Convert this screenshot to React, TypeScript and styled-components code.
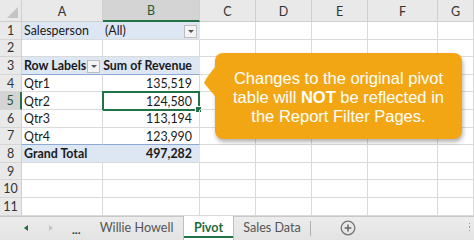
import React from "react";
import styled, { createGlobalStyle, css } from "styled-components";

const Global = createGlobalStyle`
  html, body { margin: 0; padding: 0; background: #fff; }
  body { width: 474px; height: 240px; overflow: hidden; font-family: Lato, "Open Sans", sans-serif; }
`;

const Page = styled.div`
  position: relative;
  width: 474px;
  height: 240px;
  display: flex;
  flex-direction: column;
  overflow: hidden;
`;

const Sheet = styled.div`
  display: grid;
  grid-template-columns: 22px 81px 97px 56px 56px 56px 70px 1fr;
  grid-template-rows: 22px repeat(11, 17.6px);
  font-size: 12.4px;
  color: #1a1a1a;
`;

const Corner = styled.div`
  position: relative;
  background: #e9e9e9;
  border-right: 1px solid #cfcfcf;
  border-bottom: 1px solid #cfcfcf;
  &::after {
    content: "";
    position: absolute;
    right: 3px;
    bottom: 3px;
    border-left: 11px solid transparent;
    border-bottom: 11px solid #c4c4c4;
  }
`;

const ColHead = styled.div<{ $sel?: boolean }>`
  display: flex;
  align-items: center;
  justify-content: center;
  background: ${(p) => (p.$sel ? "#d4d4d4" : "#e9e9e9")};
  border-right: 1px solid #cfcfcf;
  border-bottom: ${(p) => (p.$sel ? "2px solid #217346" : "1px solid #cfcfcf")};
  color: ${(p) => (p.$sel ? "#1f5a36" : "#333")};
  font-size: 12.5px;
  padding-top: 1px;
`;

const RowHead = styled.div<{ $sel?: boolean }>`
  display: flex;
  align-items: center;
  justify-content: center;
  background: ${(p) => (p.$sel ? "#d4d4d4" : "#e9e9e9")};
  border-right: ${(p) => (p.$sel ? "2px solid #217346" : "1px solid #cfcfcf")};
  border-bottom: 1px solid #d6d6d6;
  color: ${(p) => (p.$sel ? "#1f5a36" : "#333")};
  font-size: 12.5px;
`;

type Tone = "plain" | "filter" | "head" | "total";

const Cell = styled.div<{ $tone?: Tone; $right?: boolean; $bold?: boolean }>`
  position: relative;
  display: flex;
  align-items: center;
  justify-content: ${(p) => (p.$right ? "flex-end" : "flex-start")};
  padding: 1px 7px 0 2px;
  white-space: nowrap;
  overflow: visible;
  font-weight: ${(p) => (p.$bold ? 700 : 400)};
  border-right: 1px solid #dadada;
  border-bottom: 1px solid #dadada;
  ${(p) =>
    p.$tone === "filter" &&
    css`
      background: #dde6f3;
      border-right-color: #dde6f3;
      border-bottom-color: #dadada;
    `}
  ${(p) =>
    p.$tone === "head" &&
    css`
      background: #dde6f3;
      border-right-color: #dde6f3;
      border-bottom: 1px solid #8ea9d6;
    `}
  ${(p) =>
    p.$tone === "total" &&
    css`
      background: #dde6f3;
      border-right-color: #dde6f3;
      border-top: 1px solid #8ea9d6;
      margin-top: -1px;
    `}
`;

const SelectedCell = styled(Cell)`
  border: 2px solid #217346;
  margin: -1px 0 -1px -1px;
  padding-right: 6px;
  &::after {
    content: "";
    position: absolute;
    right: -4px;
    bottom: -4px;
    width: 5px;
    height: 5px;
    background: #217346;
    border: 1px solid #fff;
  }
`;

const Drop = styled.span`
  position: absolute;
  right: 2px;
  top: 3px;
  width: 11px;
  height: 11px;
  background: #f4f4f4;
  border: 1px solid #bdbdbd;
  display: flex;
  align-items: center;
  justify-content: center;
  &::before {
    content: "";
    border-left: 3px solid transparent;
    border-right: 3px solid transparent;
    border-top: 3px solid #555;
  }
`;

const Callout = styled.div`
  position: absolute;
  left: 215px;
  top: 53px;
  width: 247px;
  height: 86px;
  background: #f3a614;
  border-radius: 8px;
  box-shadow: 1px 3px 4px rgba(0, 0, 0, 0.3);
  color: #fff;
  font-family: "Liberation Sans", Arial, sans-serif;
  font-size: 16.5px;
  line-height: 19px;
  text-align: center;
  display: flex;
  align-items: center;
  justify-content: center;
  padding-top: 3px;
  box-sizing: border-box;
`;

const Pointer = styled.svg`
  position: absolute;
  left: -12px;
  top: 8px;
`;

const TabBar = styled.div`
  flex: 1;
  display: flex;
  align-items: stretch;
  background: linear-gradient(#ececec, #e3e3e3);
  border-top: 1px solid #c8c8c8;
  font-size: 12.6px;
  position: relative;
`;

const NavBox = styled.div`
  display: flex;
  align-items: center;
  width: 90px;
  padding-left: 24px;
  box-sizing: border-box;
`;

const Arrow = styled.span<{ $dir: "l" | "r"; $on?: boolean }>`
  width: 0;
  height: 0;
  border-top: 3.5px solid transparent;
  border-bottom: 3.5px solid transparent;
  ${(p) =>
    p.$dir === "l"
      ? css`border-right: 4px solid ${p.$on ? "#1f6b3c" : "#bbb"};`
      : css`border-left: 4px solid ${p.$on ? "#1f6b3c" : "#c4c4c4"};`}
  margin-right: 21px;
`;

const Dots = styled.span`
  color: #333;
  font-weight: 700;
  font-size: 12px;
  margin-left: -2px;
  margin-top: 3px;
`;

const Sep = styled.span`
  width: 1px;
  height: 15px;
  background: #9a9a9a;
  align-self: center;
  margin-left: 10px;
`;

const Tab = styled.div<{ $active?: boolean; $w: number }>`
  width: ${(p) => p.$w}px;
  display: flex;
  align-items: center;
  justify-content: center;
  color: ${(p) => (p.$active ? "#1e6b3c" : "#555")};
  font-weight: ${(p) => (p.$active ? 700 : 400)};
  background: ${(p) => (p.$active ? "#fff" : "transparent")};
  border-right: 1px solid ${(p) => (p.$active ? "#bfbfbf" : "transparent")};
  border-left: 1px solid ${(p) => (p.$active ? "#bfbfbf" : "transparent")};
  margin-top: -1px;
  position: relative;
  box-sizing: border-box;
  padding-bottom: 1px;
  ${(p) =>
    p.$active &&
    css`
      &::after {
        content: "";
        position: absolute;
        left: 0;
        right: 0;
        bottom: 2px;
        height: 2px;
        background: #217346;
      }
    `}
`;

const TabSep = styled.span`
  width: 1px;
  height: 15px;
  background: #b0b0b0;
  align-self: center;
`;

const AddBtn = styled.div`
  margin-left: 29px;
  display: flex;
  align-items: center;
`;

const VDots = styled.div`
  position: absolute;
  right: 4px;
  top: 6px;
  display: flex;
  flex-direction: column;
  gap: 2px;
  & > span {
    width: 1.5px;
    height: 1.5px;
    background: #999;
  }
`;

const cols = ["A", "B", "C", "D", "E", "F", "G"];

type Row = { a?: string; b?: string; tone?: Tone; bold?: boolean; aDrop?: boolean; bDrop?: boolean; sel?: boolean };

const rows: Row[] = [
  { a: "Salesperson", b: "(All)", tone: "filter", bDrop: true },
  {},
  { a: "Row Labels", b: "Sum of Revenue", tone: "head", bold: true, aDrop: true },
  { a: "Qtr1", b: "135,519" },
  { a: "Qtr2", b: "124,580", sel: true },
  { a: "Qtr3", b: "113,194" },
  { a: "Qtr4", b: "123,990" },
  { a: "Grand Total", b: "497,282", tone: "total", bold: true },
  {},
  {},
  {},
];

export default function App() {
  return (
    <Page>
      <Global />
      <Sheet>
        <Corner />
        {cols.map((c) => (
          <ColHead key={c} $sel={c === "B"}>
            {c}
          </ColHead>
        ))}
        {rows.map((r, i) => {
          const tone = r.tone ?? "plain";
          const BCell = r.sel ? SelectedCell : Cell;
          return (
            <React.Fragment key={i}>
              <RowHead $sel={r.sel}>{i + 1}</RowHead>
              <Cell $tone={tone} $bold={r.bold}>
                {r.a}
                {r.aDrop && <Drop />}
              </Cell>
              <BCell $tone={tone} $bold={r.bold} $right={tone !== "filter"}>
                {r.b}
                {r.bDrop && <Drop />}
              </BCell>
              {[0, 1, 2, 3, 4].map((k) => (
                <Cell key={k} />
              ))}
            </React.Fragment>
          );
        })}
      </Sheet>
      <TabBar>
        <NavBox>
          <Arrow $dir="l" $on />
          <Arrow $dir="r" />
          <Dots>...</Dots>
          <Sep />
        </NavBox>
        <Tab $w={93}>Willie Howell</Tab>
        <Tab $w={51} $active>
          Pivot
        </Tab>
        <Tab $w={76}>Sales Data</Tab>
        <TabSep />
        <AddBtn>
          <svg width="16" height="16" viewBox="0 0 16 16">
            <circle cx="8" cy="8" r="6.8" fill="none" stroke="#777" strokeWidth="1.3" />
            <path d="M8 4.6v6.8M4.6 8h6.8" stroke="#666" strokeWidth="1.5" />
          </svg>
        </AddBtn>
        <VDots>
          <span />
          <span />
          <span />
        </VDots>
      </TabBar>
      <Callout>
        <Pointer width="14" height="40" viewBox="0 0 14 40">
          <path d="M14 4 C9 10 4 15 1 22 C4 26 9 31 14 38 Z" fill="#f3a614" />
        </Pointer>
        <div>
          Changes to the original pivot
          <br />
          table will <b>NOT</b> be reflected in
          <br />
          the Report Filter Pages.
        </div>
      </Callout>
    </Page>
  );
}
